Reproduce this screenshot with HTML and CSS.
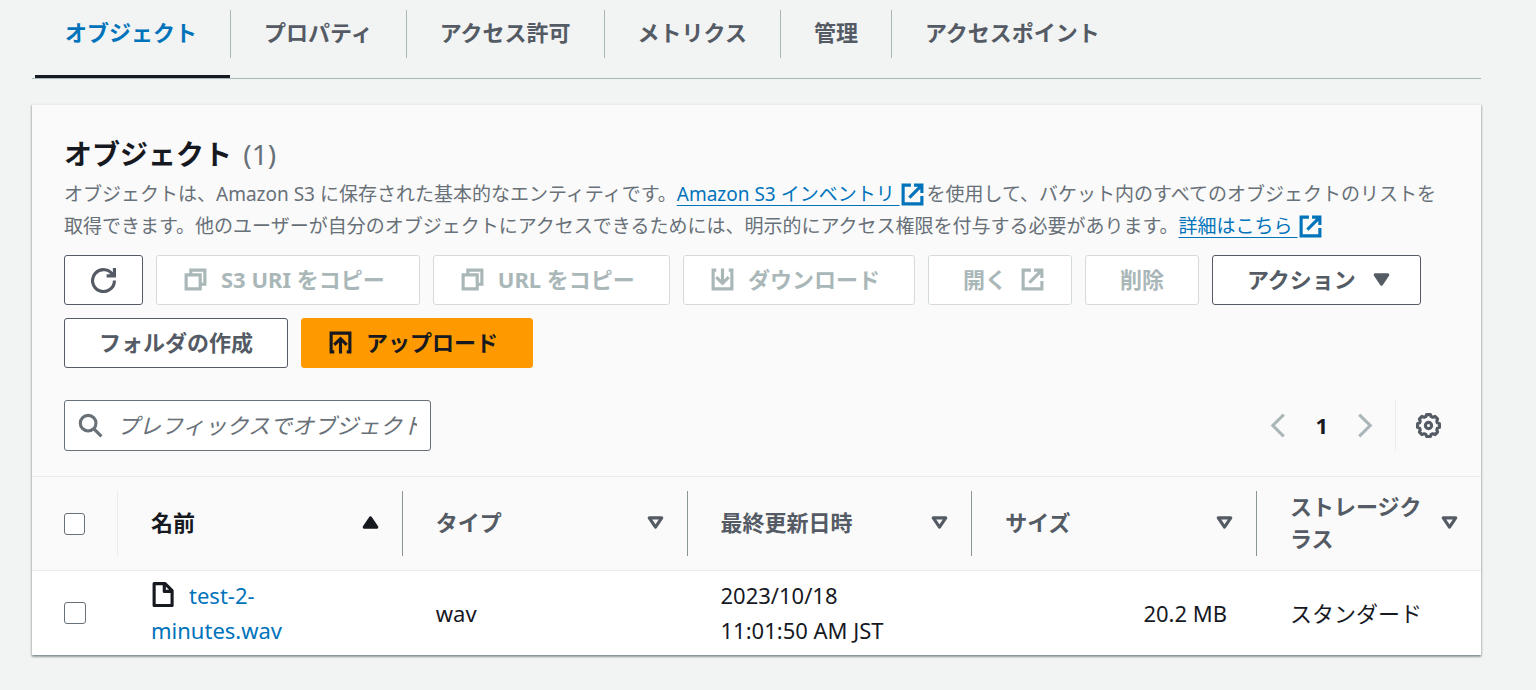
FILE: index.html
```html
<!DOCTYPE html>
<html lang="ja">
<head>
<meta charset="utf-8">
<title>オブジェクト</title>
<link rel="stylesheet" href="styles.css">
</head>
<body>
<svg class="sprite" aria-hidden="true">
  <symbol id="i-external" viewBox="0 0 16 16"><path d="M9 2h5v5M6 10l8-8M14 9v5H2V2h5"/></symbol>
  <symbol id="i-copy" viewBox="0 0 16 16"><path d="M2 5h9v9H2zM5 5V2h9v9h-3"/></symbol>
  <symbol id="i-refresh" viewBox="0 0 16 16"><path d="M10 5h5V0M15 8a7 7 0 1 1-.7-3"/></symbol>
  <symbol id="i-download" viewBox="0 0 16 16"><path d="M4 2H2v12h12V2h-2M8 1v9M4 6.500l4 4 4-4"/></symbol>
  <symbol id="i-upload" viewBox="0 0 16 16"><path d="M4 14H2V2h12v12h-2M8 15V6M4 9.500l4-4 4 4"/></symbol>
  <symbol id="i-search" viewBox="0 0 16 16"><circle cx="6.500" cy="6.500" r="5"/><path d="M10 10l5 5"/></symbol>
  <symbol id="i-prev" viewBox="0 0 16 16"><path d="M12 1L5 8l7 7"/></symbol>
  <symbol id="i-next" viewBox="0 0 16 16"><path d="M4 1l7 7-7 7"/></symbol>
  <symbol id="i-file" viewBox="0 0 16 16"><path class="round" d="M2 1h7l4.500 4.500V15H2zM8.500 1v5h5"/></symbol>
  <symbol id="i-down" viewBox="0 0 16 16"><path class="solid round" d="M4 5h8l-4 6z"/></symbol>
  <symbol id="i-up" viewBox="0 0 16 16"><path class="solid round" d="M4 11h8L8 5z"/></symbol>
  <symbol id="i-sort" viewBox="0 0 16 16"><path class="round" d="M4 5h8l-4 6z"/></symbol>
  <symbol id="i-gear" viewBox="0 0 16 16"><path class="round" d="M6.800 1h2.400l.5 1.300 1 .4 1.500-.5 1.600 1.600-.5 1.500.4 1 1.300.5v2.400l-1.300.5-.4 1 .5 1.500-1.600 1.600-1.500-.5-1 .4L9.200 15H6.800l-.5-1.300-1-.4-1.500.5-1.600-1.600.5-1.500-.4-1L1 9.200V6.800l1.300-.5.4-1-.5-1.500 1.600-1.600 1.500.5 1-.4z"/><circle cx="8" cy="8" r="2"/></symbol>
</svg>

<main class="page">
  <nav class="tabs">
    <a class="tab tab-active" href="#objects" aria-current="page">オブジェクト</a>
    <a class="tab" href="#properties">プロパティ</a>
    <a class="tab" href="#permissions">アクセス許可</a>
    <a class="tab" href="#metrics">メトリクス</a>
    <a class="tab" href="#management">管理</a>
    <a class="tab" href="#access-points">アクセスポイント</a>
  </nav>

  <section class="card" id="objects">
    <header class="card-head">
      <h2 class="title">オブジェクト <span class="count">(1)</span></h2>
      <p class="desc">オブジェクトは、Amazon S3 に保存された基本的なエンティティです。<a href="#inventory">Amazon S3 インベントリ <svg class="icon icon-inline"><use href="#i-external"/></svg></a>を使用して、バケット内のすべてのオブジェクトのリストを取得できます。他のユーザーが自分のオブジェクトにアクセスできるためには、明示的にアクセス権限を付与する必要があります。<a href="#learn-more">詳細はこちら <svg class="icon icon-inline"><use href="#i-external"/></svg></a></p>

      <div class="actions">
        <button class="btn btn-square" type="button" aria-label="更新"><svg class="icon"><use href="#i-refresh"/></svg></button>
        <button class="btn btn-lead" type="button" disabled><svg class="icon"><use href="#i-copy"/></svg>S3 URI をコピー</button>
        <button class="btn btn-lead" type="button" disabled><svg class="icon"><use href="#i-copy"/></svg>URL をコピー</button>
        <button class="btn btn-lead" type="button" disabled><svg class="icon"><use href="#i-download"/></svg>ダウンロード</button>
        <button class="btn btn-trail" type="button" disabled>開く<svg class="icon"><use href="#i-external"/></svg></button>
        <button class="btn" type="button" disabled>削除</button>
        <button class="btn btn-trail" type="button">アクション<svg class="icon"><use href="#i-down"/></svg></button>
        <button class="btn" type="button">フォルダの作成</button>
        <button class="btn btn-lead btn-primary" type="button"><svg class="icon"><use href="#i-upload"/></svg>アップロード</button>
      </div>

      <div class="tools">
        <label class="search">
          <svg class="icon"><use href="#i-search"/></svg>
          <input class="search-input" type="text" aria-label="オブジェクトを検索" placeholder="プレフィックスでオブジェクトを検索">
        </label>
        <div class="pager">
          <div class="pages">
            <button class="plain muted" type="button" aria-label="前のページ"><svg class="icon"><use href="#i-prev"/></svg></button>
            <button class="plain page-number" type="button">1</button>
            <button class="plain muted" type="button" aria-label="次のページ"><svg class="icon"><use href="#i-next"/></svg></button>
          </div>
          <div class="settings"><button class="plain" type="button" aria-label="設定"><svg class="icon"><use href="#i-gear"/></svg></button></div>
        </div>
      </div>
    </header>

    <table class="table">
      <colgroup><col class="col-check"><col><col><col><col><col class="col-class"></colgroup>
      <thead>
        <tr>
          <th scope="col"><div class="th th-check"><input class="check" type="checkbox" aria-label="すべて選択"></div></th>
          <th scope="col"><div class="th th-sorted">名前<svg class="icon"><use href="#i-up"/></svg></div></th>
          <th scope="col"><div class="th">タイプ<svg class="icon"><use href="#i-sort"/></svg></div></th>
          <th scope="col"><div class="th">最終更新日時<svg class="icon"><use href="#i-sort"/></svg></div></th>
          <th scope="col"><div class="th">サイズ<svg class="icon"><use href="#i-sort"/></svg></div></th>
          <th scope="col"><div class="th">ストレージクラス<svg class="icon"><use href="#i-sort"/></svg></div></th>
        </tr>
      </thead>
      <tbody>
        <tr>
          <td class="cell-check"><input class="check" type="checkbox" aria-label="test-2-minutes.wav を選択"></td>
          <td><svg class="icon icon-file"><use href="#i-file"/></svg><a class="file-link" href="#file">test-2-minutes.wav</a></td>
          <td>wav</td>
          <td>2023/10/18 <span class="time">11:01:50 AM JST</span></td>
          <td class="cell-size">20.2 MB</td>
          <td>スタンダード</td>
        </tr>
      </tbody>
    </table>
  </section>
</main>
</body>
</html>
```
FILE: styles.css
```css
* { box-sizing: border-box; }

body {
  margin: 0;
  background: #f2f3f3;
  color: #16191f;
  font: 22px/32px "Noto Sans", "Noto Sans CJK JP", sans-serif;
}

button, input { font: inherit; color: inherit; }

.sprite { position: absolute; width: 0; height: 0; }

.icon {
  width: 25px;
  height: 25px;
  flex: none;
  fill: none;
  stroke: currentColor;
  stroke-width: 2;
  overflow: visible;
}

.solid { fill: currentColor; }
.round { stroke-linejoin: round; }

.page { padding: 0 55px 32px 32px; }

.tabs {
  display: flex;
  height: 79px;
  border-bottom: 1px solid #aab7b8;
}

.tab {
  position: relative;
  display: flex;
  align-items: center;
  height: 48px;
  margin-top: 10px;
  padding: 0 33px 4px;
  border-right: 1px solid #aab7b8;
  color: #545b64;
  font-weight: 700;
  text-decoration: none;
}

.tab:last-child { border-right: 0; }

.tab-active { color: #0073bb; }

.tab-active::after {
  content: "";
  position: absolute;
  left: 3px;
  right: 0;
  bottom: -20px;
  height: 3px;
  background: #16191f;
}

.card {
  margin-top: 25px;
  border-top: 1px solid #eaeded;
  background: #fff;
  box-shadow: 0 2px 2px 0 rgba(0, 28, 36, .3), 1px 1px 2px 0 rgba(0, 28, 36, .15), -1px 1px 2px 0 rgba(0, 28, 36, .15);
}

.card-head {
  padding: 26px 32px 25px;
  background: #fafafa;
  border-bottom: 1px solid #eaeded;
}

.title { margin: 0 0 1px; font-size: 28px; line-height: 46px; }

.count { margin-left: 4px; color: #687078; font-weight: 400; }

.desc { margin: 0; color: #687078; font-size: 19px; }

.desc a { color: #0073bb; text-underline-offset: 4px; }

.icon-inline { margin-right: 2px; vertical-align: -6px; }

.actions { display: flex; flex-wrap: wrap; gap: 13px; margin-top: 13px; }

.btn {
  display: inline-flex;
  align-items: center;
  gap: 13px;
  height: 50px;
  padding: 0 34px 2px;
  border: 1px solid #545b64;
  border-radius: 3px;
  background: #fff;
  color: #545b64;
  font-weight: 700;
}

.btn:disabled { border-color: #d5dbdb; color: #aab7b8; }

.btn-square { padding: 0 26px; }
.btn-lead { padding-left: 26px; }
.btn-trail { padding-right: 26px; }

.btn-primary { border-color: #f90; background: #f90; color: #16191f; }

.tools { display: flex; justify-content: space-between; margin-top: 32px; }

.search {
  display: flex;
  align-items: center;
  gap: 14px;
  width: 367px;
  height: 51px;
  padding: 0 13px;
  border: 1px solid #687078;
  border-radius: 3px;
  background: #fff;
  color: #687078;
}

.search-input { flex: 1; min-width: 0; padding: 0 0 2px; border: 0; outline: 0; background: none; }

.search-input::placeholder { color: #687078; font-style: italic; opacity: 1; }

.pager { display: flex; align-items: center; gap: 17px; }

.pages { display: flex; align-items: center; gap: 25px; }

.plain { display: flex; padding: 0; border: 0; background: none; color: #545b64; }

.muted { color: #aab7b8; }

.page-number { padding-bottom: 2px; color: #16191f; font-weight: 700; }

.settings {
  display: flex;
  align-items: center;
  height: 51px;
  padding: 0 8px 0 20px;
  border-left: 1px solid #eaeded;
}

.table { width: 100%; border-collapse: collapse; table-layout: fixed; }

.col-check { width: 86px; }
.col-class { width: 224px; }

th { padding: 14px 0; background: #fafafa; border-bottom: 1px solid #eaeded; text-align: left; }

.th {
  display: flex;
  align-items: center;
  justify-content: space-between;
  height: 65px;
  padding: 0 19px 3px 33px;
  border-right: 1px solid #879596;
  color: #545b64;
}

.th-check { padding: 0 32px; border-color: #eaeded; }
.th-sorted { color: #16191f; }

th:last-child .th { border-right: 0; }

td { padding: 7px 30px 7px 33px; line-height: 35px; }

.cell-check { padding: 0 32px; }

.cell-size { text-align: right; }

.time { display: inline-block; }

.check {
  appearance: none;
  display: block;
  width: 22px;
  height: 22px;
  margin: 0;
  border: 1px solid #687078;
  border-radius: 3px;
  background: #fff;
}

.icon-file { margin-right: 13px; vertical-align: -3px; }

.file-link { color: #0073bb; text-decoration: none; }
```
